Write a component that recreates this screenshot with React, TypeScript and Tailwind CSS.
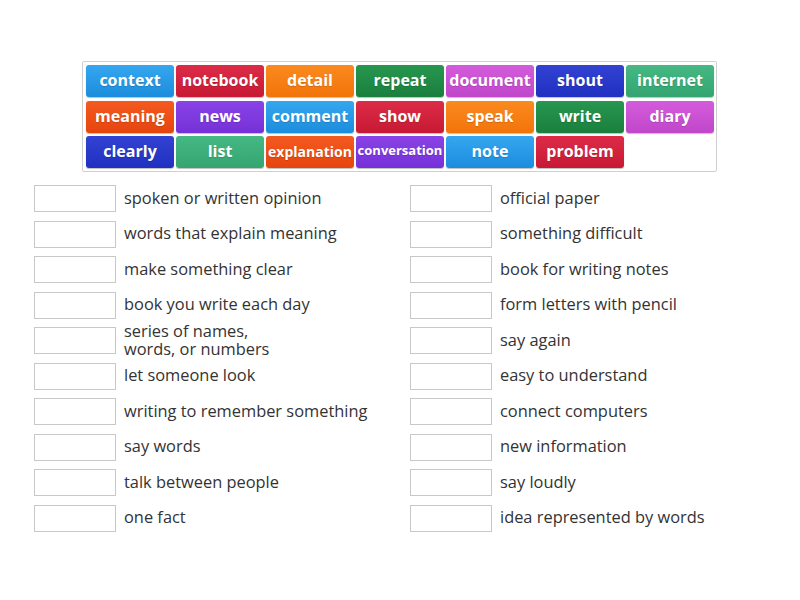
import React from "react";

type Tile = { t: string; c: string; s?: string };

const BLUE = "from-[#35a6ef] to-[#1b8ddd]";
const RED = "from-[#dc2b47] to-[#c81934]";
const ORANGE = "from-[#fb8a1e] to-[#f27408]";
const GREEN = "from-[#27974f] to-[#1a7f3e]";
const PINK = "from-[#d35cdc] to-[#c046ca]";
const NAVY = "from-[#3243d3] to-[#2030c0]";
const TEAL = "from-[#45b883] to-[#34a570]";
const RORANGE = "from-[#f45a1f] to-[#e6440d]";
const PURPLE = "from-[#8943e6] to-[#7530d8]";

const tiles: Tile[] = [
  { t: "context", c: BLUE },
  { t: "notebook", c: RED },
  { t: "detail", c: ORANGE },
  { t: "repeat", c: GREEN },
  { t: "document", c: PINK },
  { t: "shout", c: NAVY },
  { t: "internet", c: TEAL },
  { t: "meaning", c: RORANGE },
  { t: "news", c: PURPLE },
  { t: "comment", c: BLUE },
  { t: "show", c: RED },
  { t: "speak", c: ORANGE },
  { t: "write", c: GREEN },
  { t: "diary", c: PINK },
  { t: "clearly", c: NAVY },
  { t: "list", c: TEAL },
  { t: "explanation", c: RORANGE, s: "text-[14px]" },
  { t: "conversation", c: PURPLE, s: "text-[13px]" },
  { t: "note", c: BLUE },
  { t: "problem", c: RED },
];

const left = [
  ["spoken or written opinion"],
  ["words that explain meaning"],
  ["make something clear"],
  ["book you write each day"],
  ["series of names,", "words, or numbers"],
  ["let someone look"],
  ["writing to remember something"],
  ["say words"],
  ["talk between people"],
  ["one fact"],
];

const right = [
  ["official paper"],
  ["something difficult"],
  ["book for writing notes"],
  ["form letters with pencil"],
  ["say again"],
  ["easy to understand"],
  ["connect computers"],
  ["new information"],
  ["say loudly"],
  ["idea represented by words"],
];

function Column({ items }: { items: string[][] }) {
  return (
    <div className="flex flex-col w-[376px]">
      {items.map((lines, i) => (
        <div key={i} className="h-[35.5px] flex items-center">
          <div className="w-[82px] h-[27px] border border-[#c8c8c8] bg-white shrink-0" />
          <div className="ml-[8px] mb-[2px] text-[16.4px] leading-[18px] text-[#333333]">
            {lines.map((l, j) => (
              <React.Fragment key={j}>
                {j > 0 && <br />}
                {l}
              </React.Fragment>
            ))}
          </div>
        </div>
      ))}
    </div>
  );
}

export default function App() {
  return (
    <div
      className="w-[800px] h-[600px] bg-white overflow-hidden"
      style={{ fontFamily: '"Open Sans", "Liberation Sans", sans-serif' }}
    >
      <div className="pt-[61px] flex justify-center">
        <div className="ml-[-1px] border border-[#cfcfcf] rounded-[2px] p-[3px] w-[635px]">
          <div className="grid grid-cols-[repeat(7,88px)] gap-x-[2px] gap-y-[3.5px]">
            {tiles.map((tile) => (
              <div
                key={tile.t}
                className={`h-[32px] pb-[2px] rounded-[3px] bg-gradient-to-b ${tile.c} flex items-center justify-center text-white font-bold ${tile.s ?? "text-[16px]"} shadow-[0_1px_1px_rgba(0,0,0,0.25)] [text-shadow:0_1px_1px_rgba(0,0,0,0.15)] whitespace-nowrap overflow-hidden`}
              >
                {tile.t}
              </div>
            ))}
          </div>
        </div>
      </div>
      <div className="mt-[8.75px] pl-[34px] flex">
        <Column items={left} />
        <Column items={right} />
      </div>
    </div>
  );
}
